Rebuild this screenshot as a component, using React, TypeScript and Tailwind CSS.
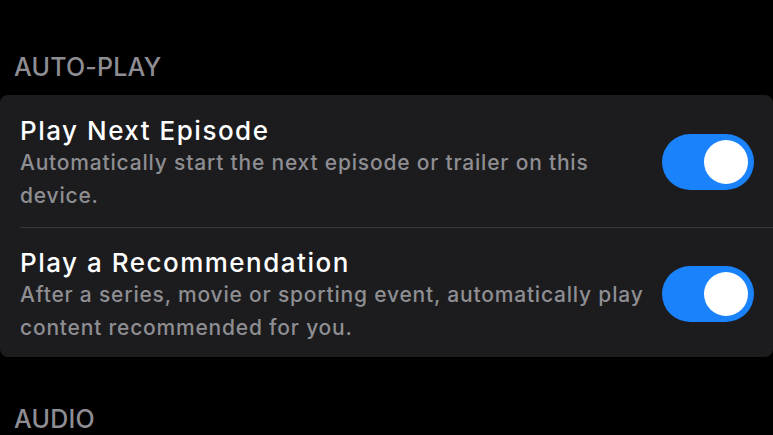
import { useState } from "react";

// ── Settings data ─────────────────────────────────────
type Setting = {
  id: string;
  title: string;
  description: string;
  pad: string;
};

const AUTO_PLAY: Setting[] = [
  {
    id: "next",
    title: "Play Next Episode",
    description: "Automatically start the next episode or trailer on this device.",
    pad: "pt-5 pb-[15px]",
  },
  {
    id: "recommend",
    title: "Play a Recommendation",
    description:
      "After a series, movie or sporting event, automatically play content recommended for you.",
    pad: "pt-[19px] pb-[13px]",
  },
];

function Toggle({ on, onChange }: { on: boolean; onChange: () => void }) {
  return (
    <button
      onClick={onChange}
      className={`shrink-0 -mt-1 w-[92px] h-[56px] rounded-full p-[6px] flex items-center transition-colors ${
        on ? "bg-[#1a82fb] justify-end" : "bg-[#39393d] justify-start"
      }`}
    >
      <span className="block w-[44px] h-[44px] rounded-full bg-white" />
    </button>
  );
}

// ── App ───────────────────────────────────────────────
export default function App() {
  const [values, setValues] = useState<Record<string, boolean>>({
    next: true,
    recommend: true,
  });

  return (
    <main
      className="min-h-screen bg-black overflow-hidden pt-[52px]"
      style={{ fontFamily: "Inter, 'Noto Sans', sans-serif" }}
    >
      {/* 标题 */}
      <h2 className="px-[14px] text-[25px] leading-[30px] font-medium tracking-[0.2px] text-[#8d8d93] mb-[13px]">
        AUTO-PLAY
      </h2>

      {/* 设置卡片 */}
      <section className="bg-[#1c1c1e] rounded-[8px]">
        {AUTO_PLAY.map((s, i) => (
          <div key={s.id}>
            {i > 0 && <div className="ml-5 h-px bg-[#38383a]" />}
            <div className={`flex items-center pl-5 pr-[19px] gap-4 ${s.pad}`}>
              <div className="flex-1">
                <div className="text-[26px] leading-[31px] font-medium text-white tracking-[1.5px]">
                  {s.title}
                </div>
                <div className="text-[21px] leading-[33px] font-medium text-[#8e8e93] tracking-[0.8px] max-w-[630px]">
                  {s.description}
                </div>
              </div>
              <Toggle
                on={values[s.id]}
                onChange={() => setValues((v) => ({ ...v, [s.id]: !v[s.id] }))}
              />
            </div>
          </div>
        ))}
      </section>

      <h2 className="px-[14px] mt-[47px] text-[25px] leading-[30px] font-medium tracking-[0.2px] text-[#8d8d93]">
        AUDIO
      </h2>
    </main>
  );
}
